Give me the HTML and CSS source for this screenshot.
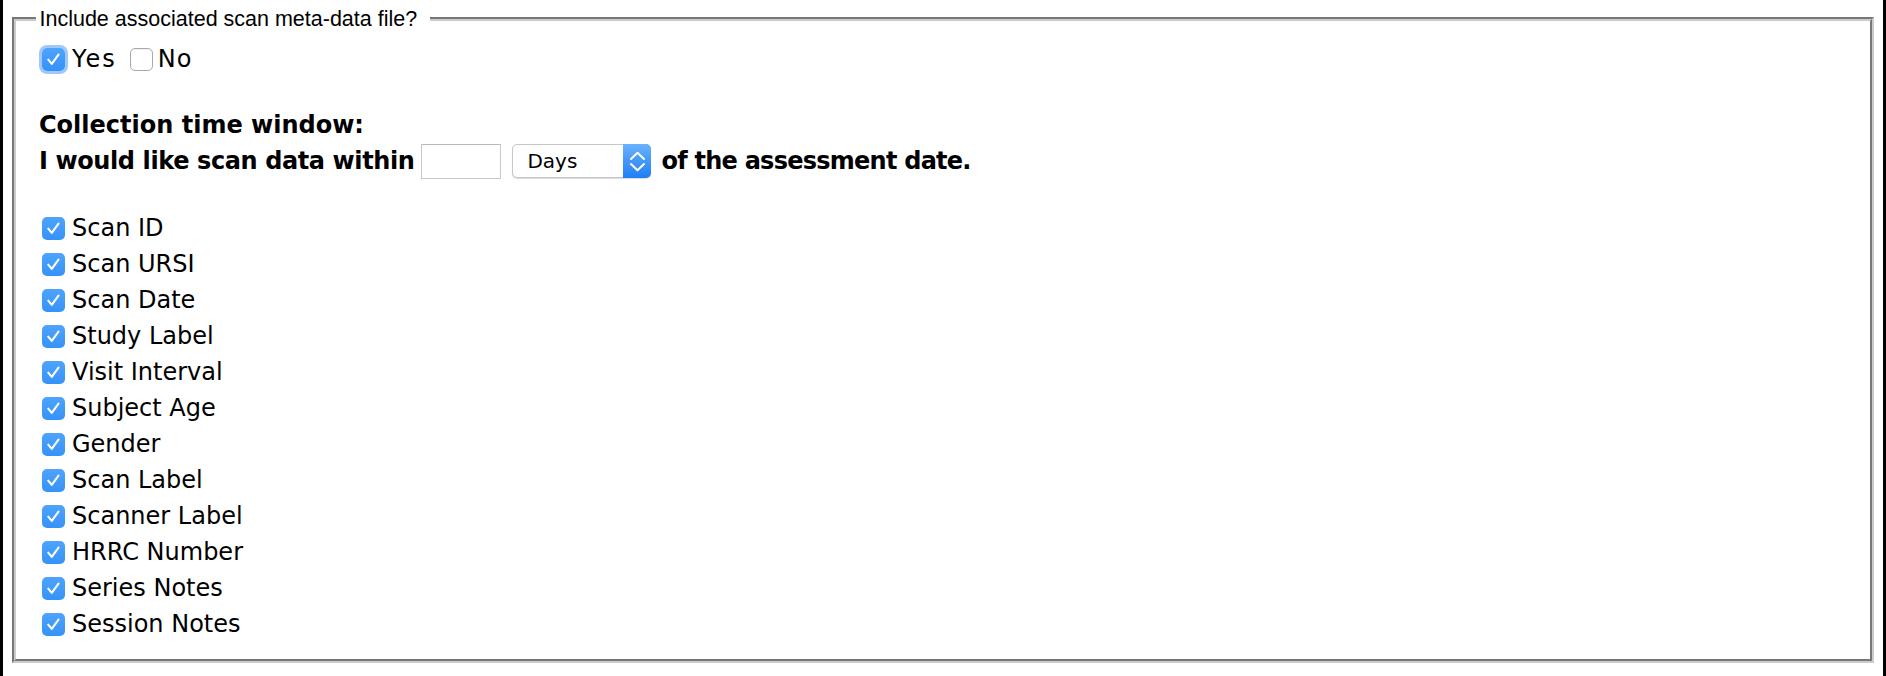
FILE: index.html
```
<!DOCTYPE html>
<html lang="en">
<head>
<meta charset="utf-8">
<title>Scan meta-data</title>
<link rel="stylesheet" href="styles.css">
</head>
<body>
<div class="page">
  <fieldset class="meta">
    <legend class="meta-legend">Include associated scan meta-data file?</legend>
    <div class="row choices">
      <label class="opt">
        <span class="box on focus"><svg viewBox="0 0 24 24"><path d="M6.5 12.2 L10.2 16.6 L17.2 6.8"/></svg></span>
        <span class="opt-text yes">Yes</span>
      </label>
      <label class="opt">
        <span class="box off"></span>
        <span class="opt-text no">No</span>
      </label>
    </div>

    <div class="window">
      <div class="row bold">Collection time window:</div>
      <div class="row bold inline">
        <span class="lead">I would like scan data within</span>
        <input type="text" class="num">
        <span class="selwrap">
          <select class="sel"><option>Days</option><option>Weeks</option><option>Months</option></select>
          <span class="arrow"><svg viewBox="0 0 28 34"><path d="M8 15 L14.5 8.7 L21 15 M8 20 L14.5 26.3 L21 20"/></svg></span>
        </span>
        <span class="tail">of the assessment date.</span>
      </div>
    </div>

    <ul class="fields">
      <li class="row"><span class="box on"><svg viewBox="0 0 24 24"><path d="M6.5 12.2 L10.2 16.6 L17.2 6.8"/></svg></span><span class="opt-text">Scan ID</span></li>
      <li class="row"><span class="box on"><svg viewBox="0 0 24 24"><path d="M6.5 12.2 L10.2 16.6 L17.2 6.8"/></svg></span><span class="opt-text">Scan URSI</span></li>
      <li class="row"><span class="box on"><svg viewBox="0 0 24 24"><path d="M6.5 12.2 L10.2 16.6 L17.2 6.8"/></svg></span><span class="opt-text">Scan Date</span></li>
      <li class="row"><span class="box on"><svg viewBox="0 0 24 24"><path d="M6.5 12.2 L10.2 16.6 L17.2 6.8"/></svg></span><span class="opt-text">Study Label</span></li>
      <li class="row"><span class="box on"><svg viewBox="0 0 24 24"><path d="M6.5 12.2 L10.2 16.6 L17.2 6.8"/></svg></span><span class="opt-text">Visit Interval</span></li>
      <li class="row"><span class="box on"><svg viewBox="0 0 24 24"><path d="M6.5 12.2 L10.2 16.6 L17.2 6.8"/></svg></span><span class="opt-text">Subject Age</span></li>
      <li class="row"><span class="box on"><svg viewBox="0 0 24 24"><path d="M6.5 12.2 L10.2 16.6 L17.2 6.8"/></svg></span><span class="opt-text">Gender</span></li>
      <li class="row"><span class="box on"><svg viewBox="0 0 24 24"><path d="M6.5 12.2 L10.2 16.6 L17.2 6.8"/></svg></span><span class="opt-text">Scan Label</span></li>
      <li class="row"><span class="box on"><svg viewBox="0 0 24 24"><path d="M6.5 12.2 L10.2 16.6 L17.2 6.8"/></svg></span><span class="opt-text">Scanner Label</span></li>
      <li class="row"><span class="box on"><svg viewBox="0 0 24 24"><path d="M6.5 12.2 L10.2 16.6 L17.2 6.8"/></svg></span><span class="opt-text">HRRC Number</span></li>
      <li class="row"><span class="box on"><svg viewBox="0 0 24 24"><path d="M6.5 12.2 L10.2 16.6 L17.2 6.8"/></svg></span><span class="opt-text">Series Notes</span></li>
      <li class="row"><span class="box on"><svg viewBox="0 0 24 24"><path d="M6.5 12.2 L10.2 16.6 L17.2 6.8"/></svg></span><span class="opt-text">Session Notes</span></li>
    </ul>
  </fieldset>
</div>
</body>
</html>
```
FILE: styles.css
```
html, body {
  margin: 0;
  padding: 0;
  background: #ffffff;
}

body {
  font-family: "DejaVu Sans", Verdana, sans-serif;
  font-size: 24px;
  color: #000000;
}

.page {
  height: 676px;
  box-sizing: border-box;
  border-left: 3px solid #000000;
  border-right: 3px solid #000000;
  padding: 7px 9px 0 9px;
}

.meta {
  margin: 0;
  border: 4px groove #cbcbcb;
  padding: 0 20px 16px 26px;
  height: 656px;
  box-sizing: border-box;
}

.meta-legend {
  font-family: "Liberation Sans", Arial, sans-serif;
  font-size: 21.5px;
  line-height: 24px;
  padding: 0 13px 0 4px;
  margin-left: -6.5px;
}

.row {
  display: flex;
  align-items: center;
  height: 36px;
  white-space: nowrap;
}

.choices {
  margin-top: 10px;
}

.opt {
  display: flex;
  align-items: center;
  margin-right: 13px;
}

.yes {
  letter-spacing: 2px;
}

.no {
  letter-spacing: 1px;
  margin-left: -2px;
}

.box {
  width: 23px;
  height: 23px;
  border-radius: 5px;
  box-sizing: border-box;
  flex: 0 0 auto;
  display: inline-flex;
  align-items: center;
  justify-content: center;
  margin-right: 7px;
}

.box svg {
  width: 23px;
  height: 23px;
}

.box path {
  fill: none;
  stroke: #ffffff;
  stroke-width: 2.2;
  stroke-linecap: round;
  stroke-linejoin: round;
}

.box.on {
  background: linear-gradient(#4ea4fd, #3592f7);
}

.box.off {
  background: #ffffff;
  border: 1px solid #a9a9a9;
  box-shadow: inset 0 1px 1px rgba(0, 0, 0, 0.06);
}

.box.focus {
  box-shadow: 0 0 0 3px rgba(110, 170, 245, 0.65);
}

.window {
  margin-top: 30px;
  margin-left: -3px;
}

.bold {
  font-weight: bold;
}

.inline {
  gap: 0;
}

.lead {
  letter-spacing: -0.4px;
  margin-right: 7px;
}

.tail {
  letter-spacing: -0.75px;
  margin-left: 10px;
}

.num {
  width: 80px;
  height: 35px;
  box-sizing: border-box;
  border: 1px solid #c9c9c9;
  border-top-color: #b9b9b9;
  margin: 0 11px 0 0;
  padding: 0 4px;
  font: inherit;
  font-weight: normal;
  background: #ffffff;
  outline: none;
}

.selwrap {
  position: relative;
  display: inline-block;
  width: 139px;
  height: 34px;
}

.sel {
  appearance: none;
  -webkit-appearance: none;
  width: 139px;
  height: 34px;
  box-sizing: border-box;
  margin: 0;
  border: 1px solid #c6c6c6;
  border-radius: 5px;
  background: #ffffff;
  box-shadow: 0 1px 1px rgba(0, 0, 0, 0.14);
  font-family: "DejaVu Sans", Verdana, sans-serif;
  font-size: 20px;
  font-weight: normal;
  color: #000000;
  padding: 0 30px 0 14px;
  outline: none;
}

.arrow {
  position: absolute;
  top: 0;
  right: 0;
  width: 28px;
  height: 34px;
  border-radius: 0 5px 5px 0;
  background: linear-gradient(#6ab2fd, #1f7ef5);
  display: flex;
  align-items: center;
  justify-content: center;
  pointer-events: none;
}

.arrow svg {
  width: 28px;
  height: 34px;
}

.arrow path {
  fill: none;
  stroke: #ffffff;
  stroke-width: 2;
  stroke-linecap: round;
  stroke-linejoin: round;
}

.fields {
  list-style: none;
  margin: 31px 0 0 0;
  padding: 0;
}
```
